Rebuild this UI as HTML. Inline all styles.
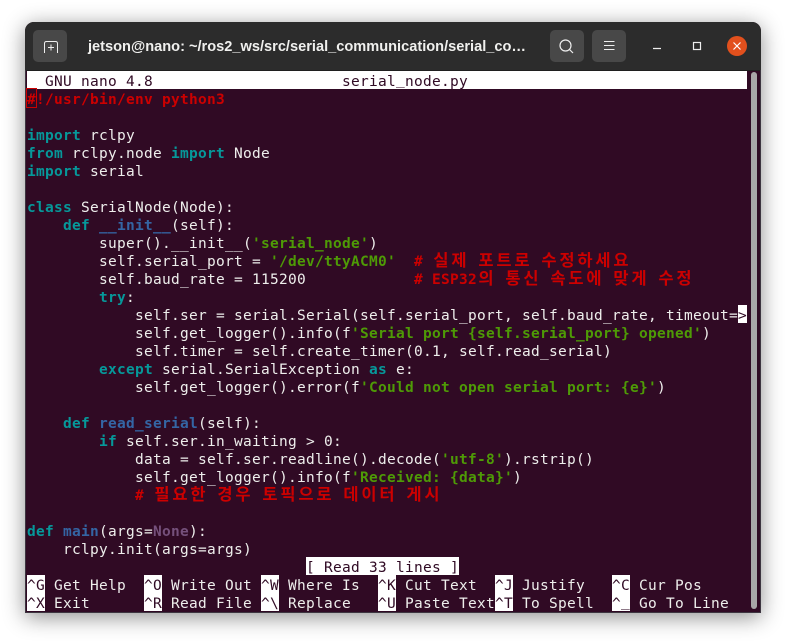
<!DOCTYPE html>
<html><head><meta charset="utf-8">
<style>
html,body{margin:0;padding:0;background:#fff;width:786px;height:641px;overflow:hidden}
#win{position:absolute;left:25px;top:22px;width:736px;height:591px;background:#300a24;border-radius:9px 9px 0 0;box-shadow:0 4px 22px rgba(0,0,0,.45);overflow:hidden}
#hd{position:absolute;left:0;top:0;width:736px;height:48px;background:#2c2c2c;border-bottom:1px solid #1f1f1f}
.btn{position:absolute;top:8px;width:34px;height:32px;background:#484848;border-radius:5px}
#ttl{position:absolute;left:63px;top:15px;font:bold 14.6px/20px "Liberation Sans",sans-serif;color:#f0f0ee;white-space:pre}
#term{position:absolute;left:2px;top:49px;width:720px;font:14.5px/22px "DejaVu Sans Mono","Liberation Mono",monospace;letter-spacing:.27px;color:#eeeeec}
.l{height:18px;white-space:pre;line-height:22px}
.c{color:#06989a;font-weight:bold}.b{color:#3465a4;font-weight:bold}.p{color:#75507b;font-weight:bold}
.g{color:#4e9a06;font-weight:bold}.r{color:#cc0000;font-weight:bold}
.w{background:#fff;color:#300a24}
span.w{display:inline-block;height:18px;line-height:22px;vertical-align:top}
.u{position:relative;top:-2px}
.k{display:inline-block;width:18px;height:18px;text-align:center;vertical-align:top;letter-spacing:0;font:bold 16.5px/16px "Noto Sans CJK KR","NanumGothic",sans-serif;color:#cc0000}
#cur{position:absolute;left:1px;top:66px;width:9px;height:18px;border:1px solid #cc0000}
#sb{position:absolute;left:726px;top:50px;width:6px;height:537px;background:#a9a6a8;border-radius:3px}
.e{position:absolute;background:#3d3540}
</style></head><body>
<div id="win">
<div id="hd">
<div class="btn" style="left:8px"></div>
<svg style="position:absolute;left:18px;top:15px" width="16" height="20" fill="none" stroke="#eee" stroke-width="1"><path d="M1.5 16V6.5q0-2 2-2h9q2 0 2 2V16M8 7.5v6M5 10.5h6"/></svg>
<div id="ttl">jetson@nano: ~/ros2_ws/src/serial_communication/serial_co…</div>
<div class="btn" style="left:525px"></div>
<svg style="position:absolute;left:533px;top:16px" width="18" height="18" fill="none" stroke="#eee" stroke-width="1.2"><circle cx="7.5" cy="7.5" r="5.5"/><path d="M11.5 11.5l3.5 3.5"/></svg>
<div class="btn" style="left:567px"></div>
<svg style="position:absolute;left:579px;top:17px" width="12" height="14" fill="none" stroke="#eee" stroke-width="1"><path d="M0 2.5h10.5M0 6.5h10.5M0 10.5h10.5"/></svg>
<svg style="position:absolute;left:625px;top:16px" width="90" height="18" fill="none" stroke="#eee"><path d="M3 10.5h8" stroke-width="1.2"/><rect x="43.5" y="4.5" width="7" height="7" stroke-width="1.2"/></svg>
<svg style="position:absolute;left:702px;top:14px" width="20" height="20" fill="none"><circle cx="10" cy="10" r="10" fill="#e2501d"/><path d="M6.5 6.5l7 7M13.5 6.5l-7 7" stroke="#fff" stroke-width="1.2"/></svg>
</div>
<div id="term">
<div class="l w">  GNU nano 4.8                     serial<span class="u">_</span>node.py</div>
<div class="l"><span class="r">#!/usr/bin/env python3</span></div>
<div class="l"> </div>
<div class="l"><span class="c">import</span> rclpy</div>
<div class="l"><span class="c">from</span> rclpy.node <span class="c">import</span> Node</div>
<div class="l"><span class="c">import</span> serial</div>
<div class="l"> </div>
<div class="l"><span class="c">class</span> SerialNode(Node):</div>
<div class="l">    <span class="c">def</span> <span class="b">__init__</span>(self):</div>
<div class="l">        super().__init__(<span class="g">'serial_node'</span>)</div>
<div class="l">        self.serial_port = <span class="g">'/dev/ttyACM0'</span>  <span class="r"># </span><span class="k">실</span><span class="k">제</span> <span class="k">포</span><span class="k">트</span><span class="k">로</span> <span class="k">수</span><span class="k">정</span><span class="k">하</span><span class="k">세</span><span class="k">요</span></div>
<div class="l">        self.baud_rate = 115200            <span class="r"># ESP32</span><span class="k">의</span> <span class="k">통</span><span class="k">신</span> <span class="k">속</span><span class="k">도</span><span class="k">에</span> <span class="k">맞</span><span class="k">게</span> <span class="k">수</span><span class="k">정</span></div>
<div class="l">        <span class="c">try</span>:</div>
<div class="l">            self.ser = serial.Serial(self.serial_port, self.baud_rate, timeout=<span class="w">&gt;</span></div>
<div class="l">            self.get_logger().info(f<span class="g">'Serial port {self.serial_port} opened'</span>)</div>
<div class="l">            self.timer = self.create_timer(0.1, self.read_serial)</div>
<div class="l">        <span class="c">except</span> serial.SerialException <span class="c">as</span> e:</div>
<div class="l">            self.get_logger().error(f<span class="g">'Could not open serial port: {e}'</span>)</div>
<div class="l"> </div>
<div class="l">    <span class="c">def</span> <span class="b">read_serial</span>(self):</div>
<div class="l">        <span class="c">if</span> self.ser.in_waiting &gt; 0:</div>
<div class="l">            data = self.ser.readline().decode(<span class="g">'utf-8'</span>).rstrip()</div>
<div class="l">            self.get_logger().info(f<span class="g">'Received: {data}'</span>)</div>
<div class="l">            <span class="r"># </span><span class="k">필</span><span class="k">요</span><span class="k">한</span> <span class="k">경</span><span class="k">우</span> <span class="k">토</span><span class="k">픽</span><span class="k">으</span><span class="k">로</span> <span class="k">데</span><span class="k">이</span><span class="k">터</span> <span class="k">게</span><span class="k">시</span></div>
<div class="l"> </div>
<div class="l"><span class="c">def</span> <span class="b">main</span>(args=<span class="p">None</span>):</div>
<div class="l">    rclpy.init(args=args)</div>
<div class="l">                               <span class="w">[ Read 33 lines ]</span></div>
<div class="l"><span class="w">^G</span> Get Help  <span class="w">^O</span> Write Out <span class="w">^W</span> Where Is  <span class="w">^K</span> Cut Text  <span class="w">^J</span> Justify   <span class="w">^C</span> Cur Pos</div>
<div class="l"><span class="w">^X</span> Exit      <span class="w">^R</span> Read File <span class="w">^\</span> Replace   <span class="w">^U</span> Paste Text<span class="w">^T</span> To Spell  <span class="w">^<span class="u">_</span></span> Go To Line</div>
</div>
<div id="cur"></div>
<div id="sb"></div>
<div class="e" style="left:0;top:48px;width:1px;height:543px"></div>
<div class="e" style="left:0;top:590px;width:736px;height:1px"></div>
<div class="e" style="left:735px;top:48px;width:1px;height:543px"></div>
</div>
</body></html>
